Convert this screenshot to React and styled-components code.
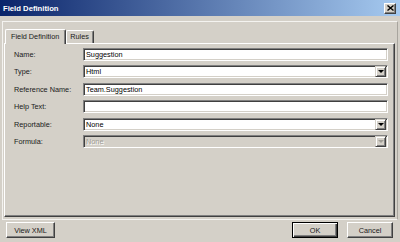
import React from "react";
import styled, { createGlobalStyle } from "styled-components";

const Global = createGlobalStyle`
  html, body {
    margin: 0;
    padding: 0;
    background: #d4d0c8;
  }
  body {
    font-family: "Liberation Sans", Arial, sans-serif;
    font-size: 7.3px;
    color: #1a1a1a;
  }
`;

const rows = [
  { label: "Name:", value: "Suggestion" },
  { label: "Type:", value: "Html", select: true },
  { label: "Reference Name:", value: "Team.Suggestion" },
  { label: "Help Text:", value: "" },
  { label: "Reportable:", value: "None", select: true },
  { label: "Formula:", value: "None", select: true, disabled: true },
];

export default function App() {
  return (
    <Window>
      <Global />
      <TitleBar>
        <Title>Field Definition</Title>
        <CloseButton>
          <svg width="7" height="6" viewBox="0 0 7 6">
            <path d="M0.5 0.5 L6.5 5.5 M6.5 0.5 L0.5 5.5" stroke="#000" strokeWidth="1.4" />
          </svg>
        </CloseButton>
      </TitleBar>
      <Frame>
        <TabStrip>
          <Tab $active>Field Definition</Tab>
          <Tab>Rules</Tab>
        </TabStrip>
        <Panel>
          {rows.map((r) => (
            <Row key={r.label}>
              <Label>{r.label}</Label>
              <Field $disabled={r.disabled}>
                <FieldText $disabled={r.disabled}>{r.value}</FieldText>
                {r.select && (
                  <DropButton>
                    <Arrow $disabled={r.disabled} />
                  </DropButton>
                )}
              </Field>
            </Row>
          ))}
        </Panel>
      </Frame>
      <ButtonRow>
        <Button $width={49}>View XML</Button>
        <Spacer />
        <Button $width={46} $default>OK</Button>
        <Button $width={46}>Cancel</Button>
      </ButtonRow>
    </Window>
  );
}

const Window = styled.div`
  width: 400px;
  height: 242px;
  display: flex;
  flex-direction: column;
  background: #d4d0c8;
  overflow: hidden;
`;

const TitleBar = styled.div`
  height: 16px;
  flex: none;
  display: flex;
  align-items: center;
  justify-content: space-between;
  padding: 0 4px 0 3px;
  background: linear-gradient(to right, #0a246a 0%, #a6caf0 100%);
  box-sizing: border-box;
`;

const Title = styled.span`
  color: #fff;
  font-weight: bold;
  font-size: 7.7px;
`;

const CloseButton = styled.div`
  width: 12px;
  height: 11px;
  box-sizing: border-box;
  background: #d4d0c8;
  border: 1px solid;
  border-color: #fff #404040 #404040 #fff;
  box-shadow: inset -1px -1px #808080;
  display: flex;
  align-items: center;
  justify-content: center;
`;

const Frame = styled.div`
  margin: 5px 2px 0 2px;
  padding: 7px 2px 2px 1px;
  border-top: 1px solid #f4f3f0;
  border-left: 1px solid #f4f3f0;
  border-right: 1px solid #a8a59e;
  border-bottom: 1px solid #f4f3f0;
`;

const TabStrip = styled.div`
  height: 14px;
  display: flex;
  align-items: flex-end;
  padding-left: 1px;
  position: relative;
  z-index: 1;
`;

const Tab = styled.div`
  box-sizing: border-box;
  height: ${(p) => (p.$active ? "15px" : "13px")};
  margin-bottom: ${(p) => (p.$active ? "-1px" : "0")};
  padding: ${(p) => (p.$active ? "2px 6px 0 5px" : "1px 4px 0 3px")};
  background: #d4d0c8;
  border-top: 1px solid #fff;
  border-left: 1px solid #fff;
  border-right: 1px solid #404040;
  box-shadow: inset -1px 0 #808080;
  border-radius: 2px 2px 0 0;
  line-height: 10px;
  white-space: nowrap;
`;

const Panel = styled.div`
  box-sizing: border-box;
  height: 174px;
  padding: 4px 6px 0 9px;
  border: 1px solid;
  border-color: #fff #404040 #404040 #fff;
  box-shadow: inset -1px -1px #808080;
  display: flex;
  flex-direction: column;
  gap: 4.4px;
`;

const Row = styled.div`
  display: grid;
  grid-template-columns: 69px 1fr;
  align-items: center;
  height: 13px;
`;

const Label = styled.span`
  white-space: nowrap;
`;

const Field = styled.div`
  box-sizing: border-box;
  height: 13px;
  display: flex;
  align-items: center;
  background: ${(p) => (p.$disabled ? "#d4d0c8" : "#fff")};
  border: 1px solid;
  border-color: #808080 #fff #fff #808080;
  box-shadow: inset 1px 1px #404040, inset -1px -1px #d4d0c8;
`;

const FieldText = styled.span`
  flex: 1;
  padding-left: 2px;
  color: ${(p) => (p.$disabled ? "#a09d96" : "#000")};
  text-shadow: ${(p) => (p.$disabled ? "1px 1px #fff" : "none")};
`;

const DropButton = styled.div`
  box-sizing: border-box;
  width: 11px;
  height: 11px;
  margin-right: 1px;
  background: #d4d0c8;
  border: 1px solid;
  border-color: #d4d0c8 #404040 #404040 #d4d0c8;
  box-shadow: inset 1px 1px #fff, inset -1px -1px #808080;
  display: flex;
  align-items: center;
  justify-content: center;
`;

const Arrow = styled.div`
  width: 0;
  height: 0;
  border-left: 3px solid transparent;
  border-right: 3px solid transparent;
  border-top: 3px solid ${(p) => (p.$disabled ? "#a09d96" : "#000")};
`;

const ButtonRow = styled.div`
  display: flex;
  align-items: center;
  gap: 9px;
  margin-top: 2px;
  padding: 0 7px 0 6px;
`;

const Spacer = styled.div`
  flex: 1;
`;

const Button = styled.div`
  box-sizing: border-box;
  width: ${(p) => p.$width}px;
  height: 16px;
  display: flex;
  align-items: center;
  justify-content: center;
  background: #d4d0c8;
  border: 1px solid;
  border-color: ${(p) => (p.$default ? "#000" : "#fff #404040 #404040 #fff")};
  box-shadow: ${(p) =>
    p.$default
      ? "inset 1px 1px #fff, inset -1px -1px #404040, inset -2px -2px #808080"
      : "inset -1px -1px #808080"};
`;
